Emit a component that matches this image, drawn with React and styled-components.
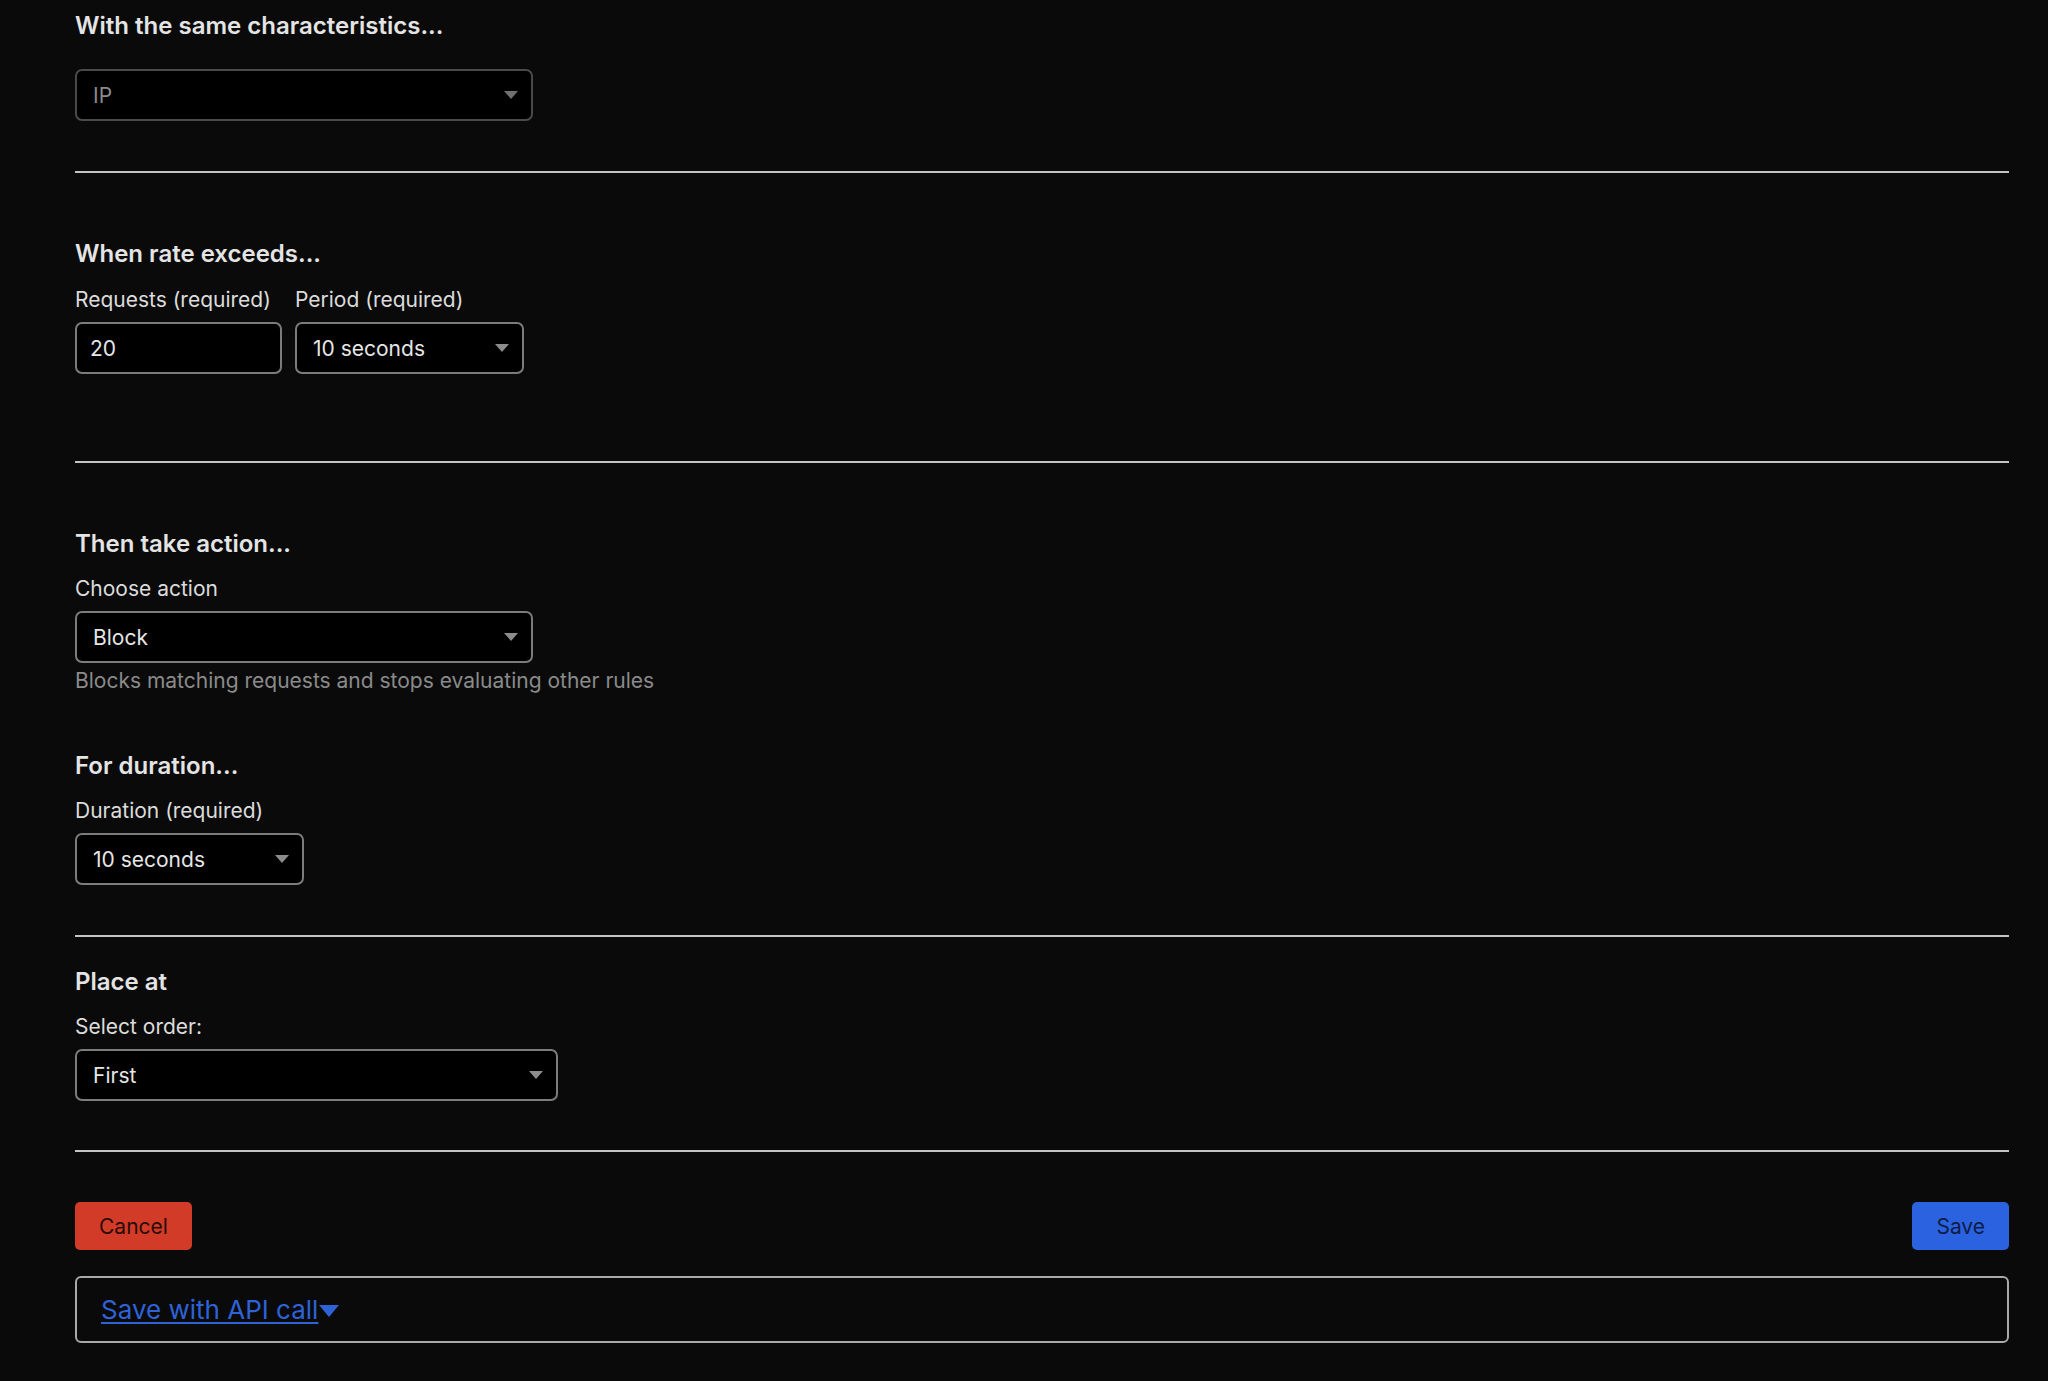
import React from "react";
import styled, { createGlobalStyle } from "styled-components";

const GlobalStyle = createGlobalStyle`
  html, body {
    margin: 0;
    padding: 0;
    background: #0a0a0a;
  }
  body {
    font-family: Inter, "Noto Sans", "Liberation Sans", sans-serif;
    color: #e2e2e2;
  }
`;

const Page = styled.div`
  padding: 11px 39px 38px 75px;
  display: flex;
  flex-direction: column;
`;

const Section = styled.section`
  display: flex;
  flex-direction: column;
  padding-top: ${(p) => p.$top || 0}px;
  padding-bottom: ${(p) => p.$bottom || 0}px;
`;

const Heading = styled.h3`
  margin: ${(p) => p.$above || 0}px 0 ${(p) => p.$gap || 7}px;
  font-size: 24px;
  line-height: 29px;
  font-weight: 600;
  color: #e4e4e4;
`;

const Label = styled.label`
  display: block;
  font-size: 21px;
  line-height: 26px;
  color: #dcdcdc;
  margin-bottom: 9px;
`;

const Field = styled.div`
  display: flex;
  flex-direction: column;
`;

const FieldRow = styled.div`
  display: flex;
  gap: 13px;
`;

const Box = styled.div`
  box-sizing: border-box;
  width: ${(p) => p.$width}px;
  height: 52px;
  display: flex;
  align-items: center;
  justify-content: space-between;
  padding: 0 13px 0 ${(p) => (p.$input ? 13 : 16)}px;
  background: #000;
  border: 2px solid ${(p) => (p.$disabled ? "#4a4a4a" : "#7c7c7c")};
  border-radius: 7px;
  font-size: 21px;
  color: ${(p) => (p.$disabled ? "#8a8a8a" : "#e6e6e6")};
`;

const Caret = styled.svg`
  width: 14px;
  height: 8px;
  flex-shrink: 0;
  fill: ${(p) => (p.$disabled ? "#707070" : "#8c8c8c")};
`;

const Help = styled.div`
  margin-top: 5px;
  font-size: 21px;
  line-height: 26px;
  color: #8b8b8b;
`;

const Divider = styled.hr`
  margin: 0;
  border: 0;
  height: 2px;
  background: #c4c4c4;
`;

const Actions = styled.div`
  display: flex;
  justify-content: space-between;
  padding-top: 50px;
`;

const Button = styled.button`
  height: 48px;
  padding: 0 24px;
  border: 0;
  border-radius: 5px;
  font-family: inherit;
  font-size: 21px;
  background: ${(p) => (p.$variant === "primary" ? "#2a62df" : "#d13b28")};
  color: ${(p) => (p.$variant === "primary" ? "#0e1d47" : "#2a0b06")};
  cursor: pointer;
`;

const ApiBox = styled.details`
  box-sizing: border-box;
  margin-top: 26px;
  min-height: 67px;
  border: 2px solid #a9a9a9;
  border-radius: 6px;
  padding: 0 24px;
  display: flex;
  align-items: center;
`;

const Summary = styled.summary`
  list-style: none;
  display: flex;
  align-items: center;
  height: 63px;
  cursor: pointer;
  &::-webkit-details-marker {
    display: none;
  }
`;

const ApiLink = styled.a`
  font-size: 26px;
  color: #2e63d8;
  text-decoration: underline;
  text-underline-offset: 3px;
`;

const LinkCaret = styled.svg`
  width: 20px;
  height: 12px;
  fill: #2e63d8;
  margin-left: 1px;
  margin-top: 2px;
`;

const Select = ({ value, width, disabled }) => (
  <Box $width={width} $disabled={disabled}>
    <span>{value}</span>
    <Caret viewBox="0 0 14 8" $disabled={disabled}>
      <path d="M0 0h14L7 8z" />
    </Caret>
  </Box>
);

export default function App() {
  return (
    <>
      <GlobalStyle />
      <Page>
        <Section $bottom={50}>
          <Heading $gap={29}>With the same characteristics...</Heading>
          <Select value="IP" width={458} disabled />
        </Section>
        <Divider />

        <Section $top={66} $bottom={87}>
          <Heading $gap={19}>When rate exceeds...</Heading>
          <FieldRow>
            <Field>
              <Label>Requests (required)</Label>
              <Box $width={207} $input>
                20
              </Box>
            </Field>
            <Field>
              <Label>Period (required)</Label>
              <Select value="10 seconds" width={229} />
            </Field>
          </FieldRow>
        </Section>
        <Divider />

        <Section $top={66} $bottom={50}>
          <Heading $gap={18}>Then take action...</Heading>
          <Label>Choose action</Label>
          <Select value="Block" width={458} />
          <Help>Blocks matching requests and stops evaluating other rules</Help>
          <Heading $gap={18} $above={57}>
            For duration...
          </Heading>
          <Label>Duration (required)</Label>
          <Select value="10 seconds" width={229} />
        </Section>
        <Divider />

        <Section $top={30} $bottom={49}>
          <Heading $gap={18}>Place at</Heading>
          <Label>Select order:</Label>
          <Select value="First" width={483} />
        </Section>
        <Divider />

        <Actions>
          <Button>Cancel</Button>
          <Button $variant="primary">Save</Button>
        </Actions>

        <ApiBox>
          <Summary>
            <ApiLink href="#">Save with API call</ApiLink>
            <LinkCaret viewBox="0 0 20 12">
              <path d="M0 0h20L10 12z" />
            </LinkCaret>
          </Summary>
        </ApiBox>
      </Page>
    </>
  );
}
